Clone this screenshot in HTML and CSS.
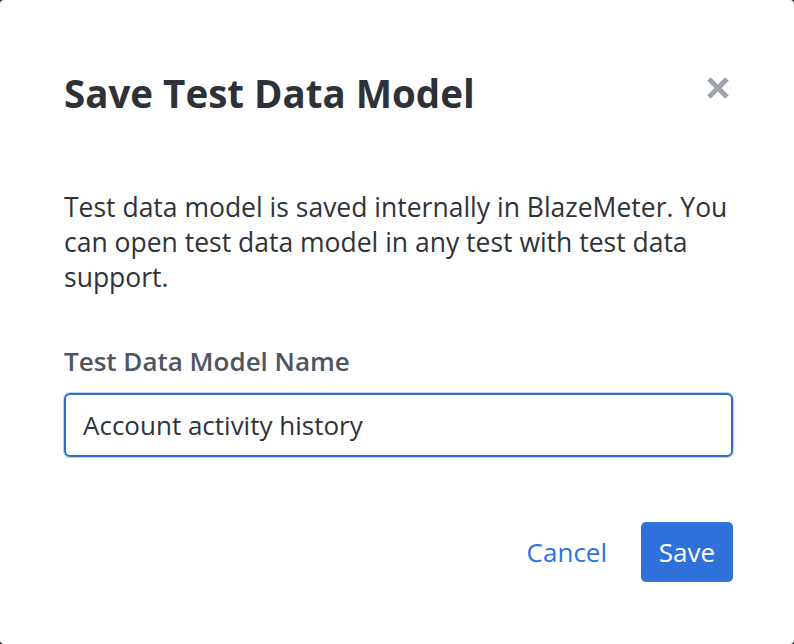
FILE: index.html
```html
<!DOCTYPE html>
<html>
<head>
<meta charset="utf-8">
<link rel="stylesheet" href="styles.css">
</head>
<body>
<div class="modal">
  <div class="header">
    <h1 class="title">Save Test Data Model</h1>
    <button class="close" aria-label="Close">
      <svg width="24" height="24" viewBox="0 0 24 24"><path d="M3 3 L21 21 M21 3 L3 21" stroke="#9ea3a9" stroke-width="5" stroke-linecap="butt"/></svg>
    </button>
  </div>
  <p class="desc">Test data model is saved internally in BlazeMeter. You can open test data model in any test with test data support.</p>
  <label class="label">Test Data Model Name</label>
  <div class="input">Account activity history</div>
  <div class="footer">
    <button class="btn-link">Cancel</button>
    <button class="btn-primary">Save</button>
  </div>
</div>
</body>
</html>
```
FILE: styles.css
```css
html, body { margin: 0; padding: 0; }
body { background: #1b1b1b; font-family: "Open Sans", "Noto Sans", sans-serif; }
.modal {
  box-sizing: border-box;
  height: 644px;
  background: #fff;
  border-radius: 4px;
  padding: 67px 61px 0 64px;
  color: #2f3338;
}
.header { display: flex; justify-content: space-between; align-items: flex-start; }
.title { margin: 0; font-size: 38.5px; font-weight: 700; line-height: 52px; color: #2e3238; }
.close { border: 0; background: none; padding: 0; margin: 9px 3px 0 0; display: flex; }
.desc { margin: 71px 0 0; font-size: 26.5px; line-height: 35px; }
.label { display: block; margin-top: 49px; font-size: 26px; font-weight: 600; color: #4d5562; line-height: 34px; }
.input {
  margin-top: 15px;
  box-sizing: border-box;
  height: 64px;
  border: 2px solid #2f6ccf;
  border-radius: 6px;
  box-shadow: 0 0 0 1px #bcd0f0;
  padding: 0 17px;
  display: flex; align-items: center;
  font-size: 26px;
  color: #2f3338;
}
.footer { display: flex; justify-content: flex-end; align-items: center; gap: 34px; margin-top: 65px; }
.btn-link { border: 0; background: none; font: inherit; font-size: 26px; color: #2f72dc; padding: 0; }
.btn-primary { border: 0; background: #2f71db; color: #fff; font: inherit; font-size: 26px; border-radius: 5px; width: 92px; height: 60px; padding: 0; }
```
